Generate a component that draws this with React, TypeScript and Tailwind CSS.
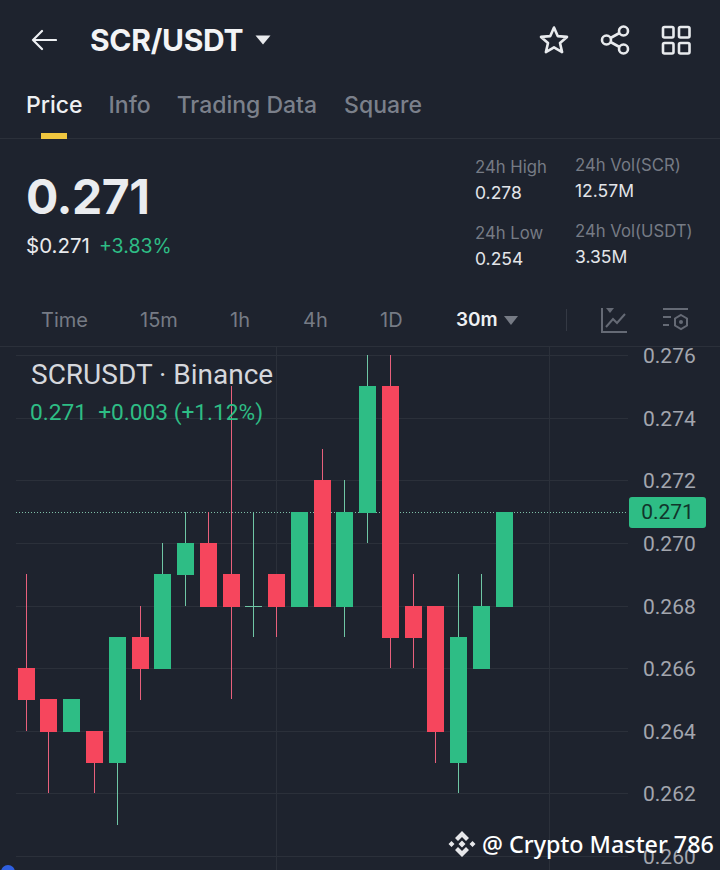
type Candle = { x: number; top: number; bottom: number; wickTop?: number; wickBottom?: number; up: boolean };

// x is the left edge of the 17px body, everything in page pixels
const candles: Candle[] = [
  { x: 18, top: 668, bottom: 700, wickTop: 574, wickBottom: 731, up: false },
  { x: 40, top: 699, bottom: 732, wickBottom: 793, up: false },
  { x: 63, top: 699, bottom: 732, up: true },
  { x: 86, top: 731, bottom: 763, wickBottom: 793, up: false },
  { x: 109, top: 637, bottom: 763, wickBottom: 825, up: true },
  { x: 132, top: 637, bottom: 669, wickTop: 606, wickBottom: 700, up: false },
  { x: 154, top: 574, bottom: 669, wickTop: 543, up: true },
  { x: 177, top: 543, bottom: 575, wickTop: 512, wickBottom: 606, up: true },
  { x: 200, top: 543, bottom: 607, wickTop: 512, up: false },
  { x: 223, top: 574, bottom: 607, wickTop: 386, wickBottom: 699, up: false },
  { x: 245, top: 606, bottom: 607, wickTop: 512, wickBottom: 637, up: true },
  { x: 268, top: 574, bottom: 607, wickBottom: 637, up: false },
  { x: 291, top: 512, bottom: 607, up: true },
  { x: 314, top: 480, bottom: 607, wickTop: 449, up: false },
  { x: 336, top: 512, bottom: 607, wickTop: 480, wickBottom: 637, up: true },
  { x: 359, top: 386, bottom: 513, wickTop: 355, wickBottom: 543, up: true },
  { x: 382, top: 386, bottom: 638, wickTop: 355, wickBottom: 668, up: false },
  { x: 405, top: 606, bottom: 638, wickTop: 574, wickBottom: 668, up: false },
  { x: 427, top: 606, bottom: 732, wickBottom: 763, up: false },
  { x: 450, top: 637, bottom: 763, wickTop: 574, wickBottom: 793, up: true },
  { x: 473, top: 606, bottom: 669, wickTop: 574, up: true },
  { x: 496, top: 512, bottom: 607, up: true },
];

const axis = [
  { y: 355, label: '0.276' },
  { y: 418, label: '0.274' },
  { y: 480, label: '0.272' },
  { y: 543, label: '0.270' },
  { y: 606, label: '0.268' },
  { y: 668, label: '0.266' },
  { y: 731, label: '0.264' },
  { y: 793, label: '0.262' },
  { y: 856, label: '0.260' },
];

const GREEN = '#2ebd85';
const RED = '#f6465d';

const Chart = () => (
  <svg viewBox="0 346 720 524" className="block w-[720px] h-[524px]">
    <line x1="0" x2="720" y1="346.5" y2="346.5" stroke="#2b303a" />
    {axis.map((a) => (
      <line key={a.y} x1="16" x2="628" y1={a.y + 0.5} y2={a.y + 0.5} stroke="#2b303a" />
    ))}
    <line x1="276.5" x2="276.5" y1="346" y2="870" stroke="#2b303a" />
    <line x1="549.5" x2="549.5" y1="346" y2="870" stroke="#2b303a" />
    {axis.map((a) => (
      <text key={a.label} x="643" y={a.y + 8} fill="#a3a6ae" fontSize="21" fontFamily="Roboto, sans-serif">
        {a.label}
      </text>
    ))}
    <line x1="16" x2="628" y1="512.5" y2="512.5" stroke="#7fbfa8" strokeDasharray="1 2" />
    {candles.map((c) => {
      const wick = c.up ? '#6fc6a5' : '#e8607c';
      const mid = c.x + 8.5;
      return (
        <g key={c.x}>
          {c.wickTop !== undefined && <line x1={mid} x2={mid} y1={c.wickTop} y2={c.top} stroke={wick} />}
          {c.wickBottom !== undefined && <line x1={mid} x2={mid} y1={c.bottom} y2={c.wickBottom} stroke={wick} />}
          <rect x={c.x} y={c.top} width="17" height={c.bottom - c.top} fill={c.bottom - c.top < 2 ? wick : c.up ? GREEN : RED} />
        </g>
      );
    })}
    <circle cx="8" cy="872" r="7" fill="#2f5fe0" />
  </svg>
);

const Stat = ({ label, value }: { label: string; value: string }) => (
  <div className="whitespace-nowrap">
    <div className="text-[16.7px] leading-[22px] text-[#767b85]">{label}</div>
    <div className="mt-[4px] text-[17.500px] leading-[22px] text-[#e3e5e9]">{value}</div>
  </div>
);

export default function App() {
  return (
    <div className="w-[720px] h-[870px] overflow-hidden bg-[#1e232e] flex flex-col [font-family:Inter,sans-serif]">
      {/* Top bar */}
      <div className="h-[80px] shrink-0 flex items-center pl-[31px] pr-[29px]">
        <svg width="26" height="22" viewBox="0 0 26 22" fill="none" stroke="#eef0f3" strokeWidth="2.2" strokeLinecap="round" strokeLinejoin="round">
          <path d="M25 11H2M11 2l-9 9 9 9" />
        </svg>
        <span className="ml-[33px] text-[30px] leading-none font-bold text-[#f3f4f6] tracking-[-0.3px]">SCR/USDT</span>
        <svg className="ml-[12px]" width="16" height="10" viewBox="0 0 16 10">
          <path d="M0.500 0.500h15L8 9.500z" fill="#e8eaed" />
        </svg>
        <div className="ml-auto flex items-center gap-[31px]">
          <svg width="30" height="30" viewBox="0 0 30 30" fill="none" stroke="#e8eaed" strokeWidth="2.6" strokeLinejoin="round">
            <path d="M15 2.500l3.700 8.600 9.300.8-7 6.100 2.100 9.100-8.100-4.800-8.100 4.800 2.100-9.100-7-6.100 9.300-.8z" />
          </svg>
          <svg width="30" height="30" viewBox="0 0 30 30" fill="none" stroke="#e8eaed" strokeWidth="2.6">
            <circle cx="6.500" cy="15" r="4.500" />
            <circle cx="23.500" cy="6" r="4.500" />
            <circle cx="23.500" cy="24" r="4.500" />
            <path d="M10.500 13l9-5M10.500 17l9 5" />
          </svg>
          <svg width="30" height="30" viewBox="0 0 30 30" fill="none" stroke="#e8eaed" strokeWidth="2.6">
            <rect x="2" y="2" width="10.500" height="10.500" rx="1.500" />
            <rect x="18" y="2" width="10.500" height="10.500" rx="1.500" />
            <rect x="2" y="18" width="10.500" height="10.500" rx="1.500" />
            <rect x="18" y="18" width="10.500" height="10.500" rx="1.500" />
          </svg>
        </div>
      </div>

      {/* Tabs */}
      <div className="h-[59px] shrink-0 border-b border-[#2b303a] flex items-start pl-[26px] gap-[26px] text-[23px] leading-[50px] font-medium text-[#7b808b]">
        <div className="relative h-[58px] text-[#eef0f3]">
          Price
          <div className="absolute left-[15px] bottom-[-1px] w-[26px] h-[6px] bg-[#f0c63f]" />
        </div>
        <div>Info</div>
        <div>Trading Data</div>
        <div className="ml-[1px]">Square</div>
      </div>

      {/* Price summary */}
      <div className="h-[155px] shrink-0 relative flex">
        <div className="pl-[26px] pt-[29px]">
          <div className="text-[48px] leading-[58px] font-bold text-[#eaecef] tracking-[-0.5px]">0.271</div>
          <div className="mt-[8px] flex items-baseline gap-[9px] leading-[24px]">
            <span className="text-[20.500px] text-[#e8eaed]">$0.271</span>
            <span className="text-[19.500px] text-[#2ebd85]">+3.83%</span>
          </div>
        </div>
        <div className="ml-auto flex pt-[15px] pr-[20px]">
          <div className="w-[100px] flex flex-col gap-[18px] pt-[2px]">
            <Stat label="24h High" value="0.278" />
            <Stat label="24h Low" value="0.254" />
          </div>
          <div className="w-[125px] flex flex-col gap-[18px]">
            <Stat label="24h Vol(SCR)" value="12.57M" />
            <Stat label="24h Vol(USDT)" value="3.35M" />
          </div>
        </div>
      </div>

      {/* Interval row */}
      <div className="h-[52px] shrink-0 flex items-center pl-[41px] text-[20px] text-[#767b85]">
        <span className="w-[99px]">Time</span>
        <span className="w-[90px]">15m</span>
        <span className="w-[73px]">1h</span>
        <span className="w-[77px]">4h</span>
        <span className="w-[76px]">1D</span>
        <span className="text-[19px] font-semibold text-[#eef0f3]">30m</span>
        <svg className="ml-[6px]" width="14" height="9" viewBox="0 0 14 9">
          <path d="M0 0h14L7 9z" fill="#767b85" />
        </svg>
        <div className="ml-[48px] w-px h-[22px] bg-[#343944]" />
        <svg className="ml-[34px]" width="26" height="26" viewBox="0 0 26 26" fill="none" stroke="#656a75" strokeWidth="2">
          <path d="M1 1v24h25" />
          <path d="M5 20l7-8 4 4 8-9" />
          <path d="M5 1h8L9 6z" fill="#656a75" stroke="none" />
        </svg>
        <svg className="ml-[35px]" width="26" height="26" viewBox="0 0 26 26" fill="none" stroke="#656a75" strokeWidth="2">
          <path d="M1 2h25M1 10h8M1 18h6" />
          <path d="M19 8l6 3.500v7L19 22l-6-3.500v-7z" />
          <circle cx="19" cy="15" r="2" fill="#656a75" stroke="none" />
        </svg>
      </div>

      {/* Chart */}
      <div className="relative flex-1">
        <Chart />
        <div className="absolute left-[31px] top-[13px] text-[28px] leading-[32px] text-[#d5d7dc] [font-family:Roboto,sans-serif]">
          SCRUSDT · Binance
        </div>
        <div className="absolute left-[30px] top-[53px] text-[22.7px] leading-[28px] text-[#2ebd85] whitespace-pre [font-family:Roboto,sans-serif]">
          0.271  +0.003 (+1.12%)
        </div>
        <div className="absolute left-[629px] top-[151px] w-[77px] h-[31px] rounded-[3px] bg-[#2ebd85] text-center text-[21px] leading-[31px] text-[#11352b] [font-family:Roboto,sans-serif]">
          0.271
        </div>
        {/* Watermark */}
        <div className="absolute left-[448px] top-[483px] flex items-center gap-[6px] text-white">
          <svg width="28" height="28" viewBox="0 0 28 28" fill="#e6e7ea">
            <path d="M14 1l7 7-3 3-4-4-4 4-3-3zM14 27l7-7-3-3-4 4-4-4-3 3zM3.500 11l3 3-3 3-3-3zM24.500 11l3 3-3 3-3-3zM14 10.500l3.500 3.500-3.500 3.500-3.500-3.500z" />
          </svg>
          <span className="text-[23.300px] leading-[30px] font-medium whitespace-nowrap [font-family:'Noto_Sans',sans-serif]">
            @ Crypto Master 786
          </span>
        </div>
      </div>
    </div>
  );
}
